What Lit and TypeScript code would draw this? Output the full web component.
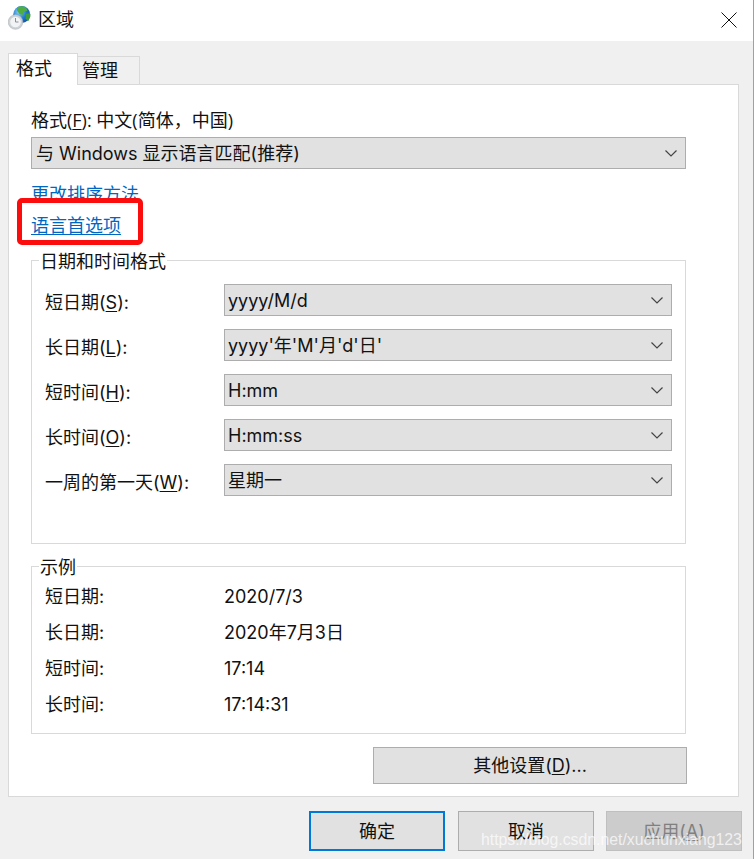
import { LitElement, html, css } from "lit";
import { customElement } from "lit/decorators.js";

const chevron = html`<svg class="chev" width="12" height="7" viewBox="0 0 12 7"><path d="M.5 .5 L6 6 L11.5 .5" fill="none" stroke="#444" stroke-width="1.2"/></svg>`;

const combos: [string, string, string, string][] = [
  ["短日期(", "S", "):", "yyyy/M/d"],
  ["长日期(", "L", "):", "yyyy'年'M'月'd'日'"],
  ["短时间(", "H", "):", "H:mm"],
  ["长时间(", "O", "):", "H:mm:ss"],
  ["一周的第一天(", "W", "):", "星期一"],
];
const samples = [
  ["短日期:", "2020/7/3"],
  ["长日期:", "2020年7月3日"],
  ["短时间:", "17:14"],
  ["长时间:", "17:14:31"],
];

@customElement("app-root")
export class AppRoot extends LitElement {
  static styles = css`
    :host {
      display: block;
      width: 754px;
      height: 859px;
      overflow: hidden;
      font-family: "Inter", "Noto Sans CJK SC", sans-serif;
      font-size: 18px;
      line-height: 24px;
      color: #111;
    }
    * { box-sizing: border-box; }
    u { text-underline-offset: 2px; text-decoration-thickness: 1px; }
    .win {
      position: relative;
      display: flex;
      flex-direction: column;
      height: 100%;
      background: #f0f0f0;
      border-right: 1px solid #a0a0a0;
    }
    .title {
      height: 41px;
      flex: none;
      background: #fff;
      display: flex;
      align-items: center;
      padding: 0 16px 0 8px;
      gap: 7px;
    }
    .logo { align-self: flex-start; margin-top: 6px; }
    .title .name { flex: 1; position: relative; top: -1px; }
    .close { position: relative; top: -1px; }
    .tabs {
      display: flex;
      align-items: flex-end;
      margin: 12px 0 -1px 8px;
      height: 32px;
      position: relative;
      z-index: 1;
    }
    .tab {
      border: 1px solid #d9d9d9;
      border-bottom: none;
      padding: 2px 0 0 4px;
      height: 29px;
      width: 63px;
      margin-left: -1px;
    }
    .tab.active {
      background: #fff;
      height: 32px;
      width: 70px;
      margin-left: 0;
      padding: 3px 0 0 7px;
    }
    .panel {
      width: 731px;
      height: 713px;
      background: #fff;
      border: 1px solid #d9d9d9;
      margin-left: 8px;
      padding: 23px 0 0 22px;
      position: relative;
      flex: none;
    }
    .fmt { height: 29px; font-family: "Open Sans", "Noto Sans CJK SC", sans-serif; }
    .combo {
      display: flex;
      align-items: center;
      justify-content: space-between;
      background: #e1e1e1;
      border: 1px solid #adadad;
      height: 32px;
      padding: 1px 8px 0 3px;
    }
    .combo.wide { width: 655px; padding-left: 4px; padding-right: 8px; }
    .chev { margin-top: -1px; }
    .links { display: flex; flex-direction: column; margin-top: 14px; height: 56px; }
    .link { color: #0067c0; flex: none; height: 31px; }
    .link u { text-decoration-color: #0067c0; }
    .group {
      position: relative;
      border: 1px solid #d9d9d9;
      width: 655px;
    }
    .legend {
      position: absolute;
      top: -11px;
      left: 7px;
      background: #fff;
      padding: 0 1px;
    }
    .g1 { height: 284px; margin-top: 21px; padding: 23px 13px 0 13px; }
    .g1 .rows { display: grid; grid-template-columns: 179px 448px; row-gap: 13px; }
    .g1 .lbl { align-self: center; position: relative; top: 3px; }
    .g2 { height: 168px; margin-top: 22px; padding: 18px 13px 0 13px; }
    .g2 .rows { display: grid; grid-template-columns: 179px 1fr; grid-auto-rows: 36px; }
    .other {
      display: flex;
      justify-content: flex-end;
      margin: 13px 0 0 0;
      padding-right: 51px;
    }
    .btn {
      display: flex;
      align-items: center;
      justify-content: center;
      background: #e1e1e1;
      border: 1px solid #adadad;
    }
    .btn.big { width: 314px; height: 37px; }
    .footer {
      display: flex;
      gap: 13px;
      margin: 14px 0 0 309px;
    }
    .footer .btn { width: 136px; height: 40px; padding-top: 1px; }
    .footer .ok { border: 2px solid #0078d7; }
    .footer .apply { background: #cccccc; border-color: #bfbfbf; color: #808080; margin-left: -1px; }
    .red {
      position: absolute;
      left: 17px;
      top: 198px;
      width: 126px;
      height: 47px;
      border: 5px solid #fb0d0d;
      border-radius: 5px;
      z-index: 2;
    }
    .mark {
      position: absolute;
      left: 481px;
      top: 829px;
      font-family: "Liberation Sans", sans-serif;
      font-size: 15.8px;
      line-height: 22px;
      color: rgba(255, 255, 255, 0.72);
      white-space: nowrap;
      z-index: 3;
    }
  `;

  render() {
    return html`<div class="win">
      <div class="title">
        <svg class="logo" width="23" height="24" viewBox="0 0 23 24">
          <defs>
            <radialGradient id="g" cx="0.35" cy="0.35" r="0.75">
              <stop offset="0" stop-color="#8fd4f7" />
              <stop offset="0.55" stop-color="#1f7ad0" />
              <stop offset="1" stop-color="#124c9c" />
            </radialGradient>
          </defs>
          <circle cx="13.7" cy="8.5" r="8.5" fill="url(#g)" />
          <path d="M9 1.5c3-1.6 6-1.6 9 0l1.5 3-3.5 1.5-1.5 3-3-1-2.5-3.5z" fill="#4fae3f" />
          <path d="M18 8l4-1 .5 3-2 5-3-2z" fill="#3f9e3a" />
          <circle cx="7.5" cy="16" r="7.3" fill="#cdd2d6" stroke="#b0b5b9" stroke-width=".6" />
          <circle cx="7.5" cy="16" r="5.3" fill="#f2f3f4" />
          <path d="M7.5 12v4h3" fill="none" stroke="#8a8f94" stroke-width="1" />
        </svg>
        <span class="name">区域</span>
        <svg class="close" width="16" height="16" viewBox="0 0 16 16">
          <path d="M.5.5l15 15M15.5.5l-15 15" stroke="#111" stroke-width="1" fill="none" />
        </svg>
      </div>
      <div class="tabs">
        <div class="tab active">格式</div>
        <div class="tab">管理</div>
      </div>
      <div class="panel">
        <div class="fmt">格式(<u>F</u>): 中文(简体，中国)</div>
        <div class="combo wide"><span>与 Windows 显示语言匹配(推荐)</span>${chevron}</div>
        <div class="links">
          <span class="link">更改排序方法</span>
          <span class="link"><u>语言首选项</u></span>
        </div>
        <div class="group g1">
          <span class="legend">日期和时间格式</span>
          <div class="rows">
            ${combos.map(
              ([a, k, b, v]) => html`<span class="lbl">${a}<u>${k}</u>${b}</span>
                <div class="combo"><span>${v}</span>${chevron}</div>`
            )}
          </div>
        </div>
        <div class="group g2">
          <span class="legend">示例</span>
          <div class="rows">
            ${samples.map(([a, b]) => html`<span>${a}</span><span>${b}</span>`)}
          </div>
        </div>
        <div class="other">
          <div class="btn big"><span>其他设置(<u>D</u>)...</span></div>
        </div>
      </div>
      <div class="footer">
        <div class="btn ok">确定</div>
        <div class="btn">取消</div>
        <div class="btn apply"><span>应用(<u>A</u>)</span></div>
      </div>
      <div class="red"></div>
      <div class="mark">https://blog.csdn.net/xuchunxiang123</div>
    </div>`;
  }
}
